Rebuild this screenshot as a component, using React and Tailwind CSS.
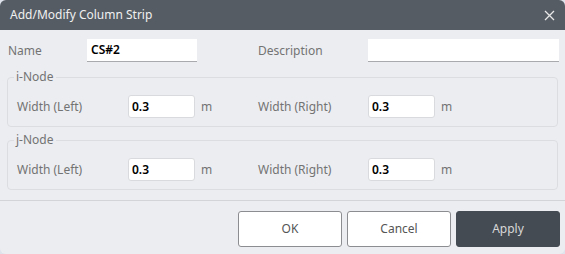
import React from "react";

const font = { fontFamily: '"Noto Sans", "Noto Sans CJK KR", sans-serif' };

function Field({ value, w = "w-[67px]" }) {
  return (
    <div
      className={`${w} h-[23px] bg-white border border-[#d9dadd] rounded-[3px] flex items-center pl-[3px] text-[12px] font-semibold text-black`}
    >
      {value}
    </div>
  );
}

function Row() {
  return (
    <div className="flex items-center h-[23px]">
      <div className="w-[120px] pl-[9px] text-[12px] text-[#737373]">Width (Left)</div>
      <Field value="0.3" />
      <div className="w-[63px] pl-[6px] text-[12px] text-[#737373]">m</div>
      <div className="w-[110px] text-[12px] text-[#737373]">Width (Right)</div>
      <Field value="0.3" />
      <div className="pl-[6px] text-[12px] text-[#737373]">m</div>
    </div>
  );
}

function Group({ title, mt }) {
  return (
    <fieldset className={`${mt} mx-[7px] border border-[#dcdde1] rounded-[4px] px-0 pt-[10px] pb-[8px] min-w-0`}>
      <legend className="ml-[6px] px-[2px] text-[12px] leading-[16px] text-[#737373]">{title}</legend>
      <Row />
    </fieldset>
  );
}

export default function App() {
  return (
    <div className="w-[565px] h-[254px] bg-[#dfe4ec]" style={font}>
      <div className="w-[565px] h-[254px] bg-[#ecedf1] rounded-[6px] overflow-hidden flex flex-col">
        <div className="h-[30px] shrink-0 bg-[#555c64] flex items-center justify-between pl-[10px] pr-[9px]">
          <span className="text-[12px] text-[#f0f0f0]">Add/Modify Column Strip</span>
          <svg width="11" height="11" viewBox="0 0 11 11" className="mr-[1px]">
            <path d="M1 1 L10 10 M10 1 L1 10" stroke="#e8e8e8" strokeWidth="1.3" />
          </svg>
        </div>
        <div className="pt-[9px]">
          <div className="flex items-center h-[23px]">
            <div className="w-[87px] pl-[8px] text-[12px] text-[#737373]">Name</div>
            <div className="w-[110px] h-[23px] bg-white border-b border-[#a9aaad] flex items-center pl-[4px] text-[12px] font-semibold text-black">
              CS#2
            </div>
            <div className="w-[110px] pl-[61px] box-content text-[12px] text-[#737373]">Description</div>
            <div className="w-[191px] h-[23px] bg-white border-b border-[#a9aaad]" />
          </div>
          <Group title="i-Node" mt="mt-[7px]" />
          <Group title="j-Node" mt="mt-[5px]" />
        </div>
        <div className="mt-[10px] h-px shrink-0 bg-[#d3d4d8]" />
        <div className="mt-[10px] flex justify-end gap-[5px] pr-[5px]">
          <button className="w-[104px] h-[36px] bg-white border border-[#8c8d90] rounded-[3px] text-[12px] text-[#555]">OK</button>
          <button className="w-[104px] h-[36px] bg-white border border-[#8c8d90] rounded-[3px] text-[12px] text-[#555]">Cancel</button>
          <button className="w-[104px] h-[36px] bg-[#454b53] border border-[#454b53] rounded-[3px] text-[12px] text-[#d8d8d8]">Apply</button>
        </div>
      </div>
    </div>
  );
}
